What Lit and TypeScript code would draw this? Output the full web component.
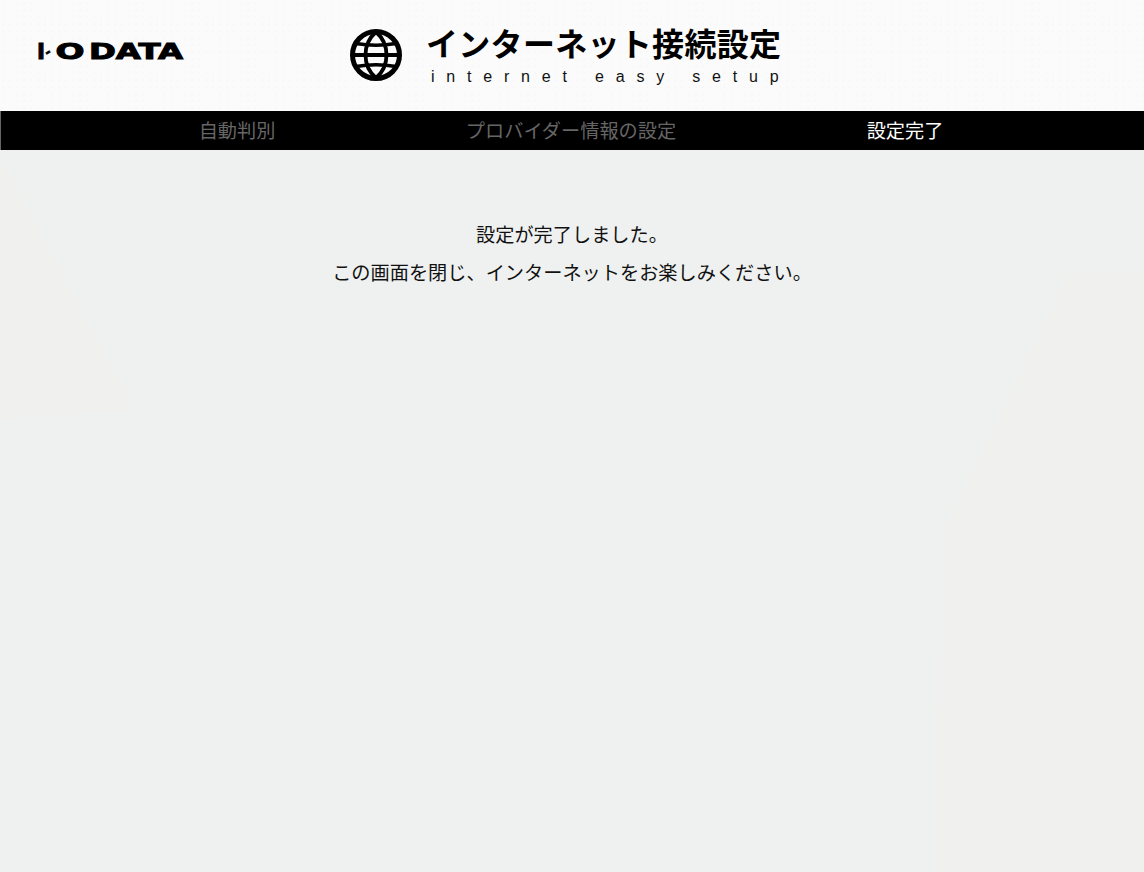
import { LitElement, html, css, svg } from "lit";
import { customElement } from "lit/decorators.js";

@customElement("app-root")
export class AppRoot extends LitElement {
  static styles = css`
    :host {
      display: block;
      position: relative;
      height: 872px;
      overflow: hidden;
      background: #f0f0ef;
      font-family: "Noto Sans CJK JP", "Noto Sans", sans-serif;
      color: #111;
    }
    .bg {
      position: absolute;
      left: 0;
      top: 0;
      width: 1144px;
      height: 872px;
    }
    .content {
      position: relative;
      display: flex;
      flex-direction: column;
    }
    header {
      height: 111px;
      background-color: #fafbfa;
      background-image: radial-gradient(circle, #f6f7f6 1px, transparent 1px);
      background-size: 7px 7px;
      display: flex;
      align-items: center;
    }
    .logo {
      width: 150px;
      height: 22px;
      margin-left: 36px;
      margin-top: -9px;
      flex: none;
      overflow: visible;
    }
    .logo text {
      font-family: "DejaVu Sans", sans-serif;
      font-weight: 700;
      font-size: 22px;
      fill: #000;
      stroke: #000;
      stroke-width: 1px;
    }
    .logo .mark {
      font-size: 14px;
      stroke-width: 0.4px;
    }
    .brand {
      display: flex;
      align-items: flex-start;
      margin-left: 164px;
    }
    .globe {
      width: 52px;
      height: 52px;
      flex: none;
      margin-top: 4px;
    }
    .titles {
      margin-left: 24px;
      margin-top: -3px;
    }
    .title {
      font-size: 32px;
      font-weight: 700;
      line-height: 40px;
      letter-spacing: 0.3px;
      color: #000;
      white-space: nowrap;
    }
    .sub {
      font-family: "Liberation Sans", sans-serif;
      font-size: 16px;
      line-height: 20px;
      letter-spacing: 11.8px;
      margin-top: 5px;
      margin-left: 5px;
      color: #111;
      white-space: nowrap;
    }
    nav {
      height: 39px;
      background: #000;
      border-left: 1px solid #666;
      display: flex;
      justify-content: center;
      box-sizing: border-box;
      padding-right: 3px;
    }
    .step {
      width: 334px;
      text-align: center;
      font-size: 19.2px;
      line-height: 38px;
      color: #666;
    }
    .step.on {
      color: #fff;
    }
    main {
      padding-top: 65px;
      text-align: center;
      font-size: 19.2px;
      line-height: 38px;
    }
    p {
      margin: 0;
    }
  `;

  private globe() {
    return svg`
      <circle cx="26" cy="26" r="23.5" fill="none" stroke="#000" stroke-width="5"/>
      <path d="M26 3C12 15 12 37 26 49M26 3C40 15 40 37 26 49" fill="none" stroke="#000" stroke-width="3.8"/>
      <path d="M2.5 26H49.5" stroke="#000" stroke-width="3.8"/>
      <path d="M6 14.5Q26 18 46 14.5M6 37.5Q26 34 46 37.5" fill="none" stroke="#000" stroke-width="3.6"/>
    `;
  }

  private logo() {
    return svg`
      <text x="1" y="19" textLength="8" lengthAdjust="spacingAndGlyphs">I</text>
      <text class="mark" transform="translate(11.5 17.5) rotate(-30)">-</text>
      <text x="19.5" y="19" textLength="29" lengthAdjust="spacingAndGlyphs">O</text>
      <text x="53" y="19" textLength="94" lengthAdjust="spacingAndGlyphs">DATA</text>
    `;
  }

  render() {
    return html`
      <svg class="bg" viewBox="0 0 1144 872" aria-hidden="true">
        <path fill="#eff1f0" d="M0 150H1144V270L1070 270L942 535L800 280L320 290L135 410L18 190L0 160Z"/>
        <path fill="#eff1f0" d="M0 420L135 410L320 290L800 280L942 535L935 872H0Z"/>
      </svg>
      <div class="content">
        <header>
          <svg class="logo" viewBox="0 0 150 22">${this.logo()}</svg>
          <div class="brand">
            <svg class="globe" viewBox="0 0 52 52">${this.globe()}</svg>
            <div class="titles">
              <div class="title">インターネット接続設定</div>
              <div class="sub">internet easy setup</div>
            </div>
          </div>
        </header>
        <nav>
          <div class="step">自動判別</div>
          <div class="step">プロバイダー情報の設定</div>
          <div class="step on">設定完了</div>
        </nav>
        <main>
          <p>設定が完了しました。</p>
          <p>この画面を閉じ、インターネットをお楽しみください。</p>
        </main>
      </div>
    `;
  }
}
